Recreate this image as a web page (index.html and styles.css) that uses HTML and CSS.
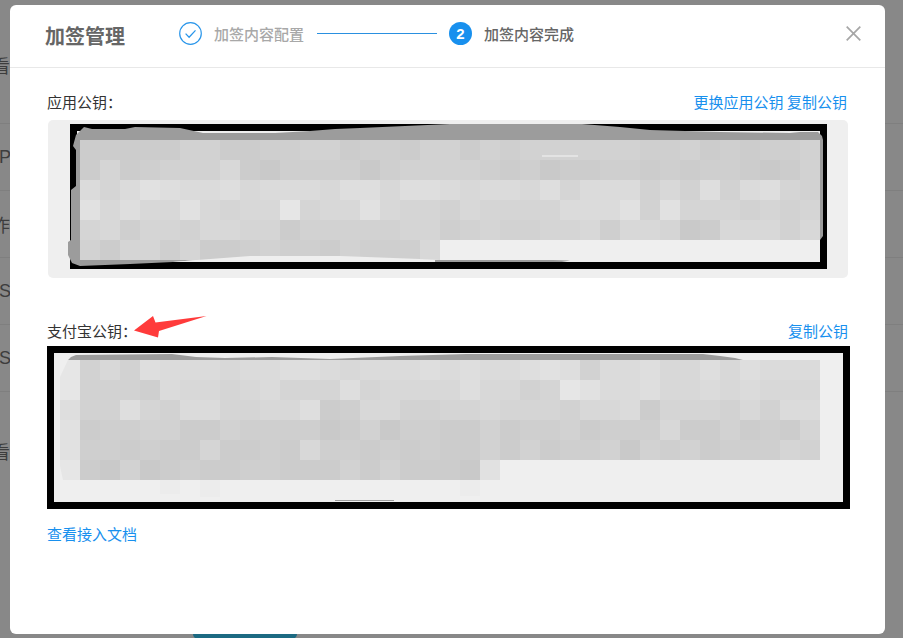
FILE: index.html
```html
<!DOCTYPE html>
<html lang="zh-CN">
<head>
<meta charset="utf-8">
<title>加签管理</title>
<link rel="stylesheet" href="styles.css">
</head>
<body>
<div class="page">
  <div class="row row-first"><span class="row-text row-cjk">查看</span></div>
  <div class="row"><span class="row-text row-latin">PI</span></div>
  <div class="row"><span class="row-text row-cjk">工作</span></div>
  <div class="row"><span class="row-text row-latin">SA</span></div>
  <div class="row"><span class="row-text row-latin">SA</span></div>
  <div class="row row-last"><span class="row-text row-cjk">查看</span></div>
  <div class="page-button"></div>
</div>

<div class="modal">
  <header class="modal-header">
    <h1 class="modal-title">加签管理</h1>
    <ol class="steps">
      <li class="step step-done">
        <svg class="step-icon" viewBox="0 0 23 23"><circle cx="11.5" cy="11.5" r="10.8" fill="none" stroke="#2a96ea" stroke-width="1.2"/><path d="M6.6 11.6l3.5 3.6 6.4-6.8" fill="none" stroke="#2a96ea" stroke-width="1.3"/></svg>
        <span>加签内容配置</span>
      </li>
      <li class="step-line"></li>
      <li class="step step-active">
        <span class="step-num">2</span>
        <span>加签内容完成</span>
      </li>
    </ol>
    <svg class="close" viewBox="0 0 15 15"><path d="M.7.7l13.6 13.6M14.3.7L.7 14.3" fill="none" stroke="#a6a6a6" stroke-width="1.7"/></svg>
  </header>

  <main class="modal-body">
    <section class="key key-app">
      <div class="key-head">
        <span class="key-label">应用公钥：</span>
        <span class="key-links"><a>更换应用公钥</a> <a>复制公钥</a></span>
      </div>
      <div class="key-panel">
        <svg class="shot shot-app" viewBox="48 120 800 158">
          <rect x="73.5" y="127.500" width="750" height="138" fill="#efefef" stroke="#000" stroke-width="7"/>
          <path class="smear" d="M76 135L84 127L92 129L125 129L135 127L180 128L203 133L275 133L310 131L335 129L360 128L450 124L582 124L620 127L650 130L685 131L720 132L790 133L800 132L818 132L822 136L823 140L823 236L820 240L80 240L80 260L197 260L173 262L130 264L80 266L72 263L68 255L68 242L71 240L71 190L76 186L76 150L73 146Z"/>
          <g class="cells" data-x="80" data-y="140" data-set="app"></g>
          <path class="patch" d="M173 262L197 260L250 256L340 256L420 259L440 260L440 262Z"/>
          <path class="smear" d="M435 260H553L570 260.500L562 262H435Z"/>
          <rect class="scratch" x="542" y="155.500" width="36" height="1"/>
        </svg>
      </div>
    </section>

    <section class="key key-alipay">
      <div class="key-head">
        <span class="key-label">支付宝公钥：</span>
        <span class="key-links"><a>复制公钥</a></span>
      </div>
      <svg class="arrow" viewBox="0 0 73 22"><path d="M0 14.500L19 0L21.500 6.500L72.500 0L25 15L24 21.500Z" fill="#ff3b3b"/></svg>
      <svg class="shot shot-alipay" viewBox="47 346 803 163">
        <rect x="50.500" y="349.500" width="796" height="156" fill="#efefef" stroke="#000" stroke-width="7"/>
        <path class="smear" d="M68 360L71 357L76 355L172 354L196 357L225 358L272 357L330 359L400 356L466 354L703 354L720 356L735 358L743 360Z"/>
        <g class="cells" data-x="60" data-y="360" data-set="alipay"></g>
        <path class="patch" d="M60 360H68L60 377ZM60 466L63 480H60Z"/>
        <rect class="faint" x="160" y="480" width="20" height="14"/>
        <rect class="faint" x="200" y="480" width="20" height="17"/>
        <rect class="faint" x="460" y="480" width="20" height="16"/>
        <rect class="smear" x="335" y="500" width="59" height="1"/>
      </svg>
    </section>

    <a class="doc-link">查看接入文档</a>
  </main>
</div>
<script src="mosaic.js"></script>
</body>
</html>
```

FILE: styles.css
```css
* { box-sizing: border-box; }

html, body { height: 100%; }

body {
  margin: 0;
  overflow: hidden;
  background: #888;
  font-family: "Noto Sans CJK SC", "Liberation Sans", sans-serif;
}

.page { padding-top: 7px; }

.row {
  height: 67px;
  display: flex;
  align-items: center;
  border-bottom: 1px solid #7f7f7f;
  color: #3d3d3d;
  white-space: nowrap;
}

.row-first { height: 117px; }
.row-last { height: 118px; border-bottom: 0; }
.row-text { display: block; }
.row-cjk { margin-left: -26px; font-size: 18px; }
.row-latin { margin-left: -1px; font-size: 18px; font-family: "Liberation Sans", sans-serif; }

.page-button {
  width: 104px;
  height: 32px;
  margin: 97px 0 0 193px;
  border-radius: 5px;
  background: #1c6a82;
}

.modal {
  position: absolute;
  left: 10px;
  top: 5px;
  width: 875px;
  height: 629px;
  border-radius: 6px;
  background: #fff;
}

.modal-header {
  position: relative;
  height: 63px;
  padding-left: 35px;
  display: flex;
  align-items: center;
  border-bottom: 1px solid #e8e8e8;
}

.modal-title {
  width: 134px;
  margin: 0;
  font-size: 20px;
  font-weight: 700;
  line-height: 28px;
  color: #666;
}

.steps {
  display: flex;
  align-items: center;
  margin: -6px 0 0;
  padding: 0;
  list-style: none;
}

.step {
  display: flex;
  align-items: center;
  gap: 12px;
  font-size: 15px;
  font-weight: 500;
  line-height: 23px;
}

.step-done { color: #a8a8a8; }
.step-active { color: #666; }

.step-icon { width: 23px; height: 23px; }

.step-num {
  width: 23px;
  height: 23px;
  border-radius: 50%;
  background: #1890ee;
  color: #fff;
  font-family: "Liberation Sans", sans-serif;
  font-size: 15px;
  font-weight: 700;
  line-height: 23px;
  text-align: center;
}

.step-line {
  width: 120px;
  height: 1px;
  margin: 0 12px 0 13px;
  background: #2a90e0;
}

.close {
  position: absolute;
  left: 836px;
  top: 21px;
  width: 15px;
  height: 15px;
}

.modal-body { padding: 22px 37px 0; }

.key { position: relative; }
.key-alipay { margin-top: 41px; }

.key-head {
  display: flex;
  justify-content: space-between;
  height: 30px;
  padding-top: 1px;
  font-size: 15px;
  line-height: 22px;
}

.key-label { color: #333; }
.key-links { color: #1890ee; }

.key-panel {
  width: 800px;
  height: 158px;
  margin-left: 1px;
  overflow: hidden;
  border-radius: 5px;
  background: #efefef;
}

.key-app .key-links { margin-right: 1px; }
.key-alipay .key-head { height: 27px; }

.shot { display: block; }
.shot-app { width: 800px; height: 158px; }
.shot-alipay { width: 803px; height: 163px; }

.smear { fill: #9c9c9c; }
.patch { fill: #efefef; }
.faint { fill: #ececec; }
.scratch { fill: #f4f4f4; }

.arrow {
  position: absolute;
  left: 87px;
  top: -3px;
  width: 73px;
  height: 22px;
}

.doc-link {
  display: block;
  margin-top: 14px;
  font-size: 15px;
  line-height: 22px;
  color: #1890ee;
}
```

FILE: mosaic.js
```js
var SHADES = ['#c9c9c9', '#cccccc', '#cfcfcf', '#d2d2d2', '#d5d5d5', '#d8d8d8', '#dbdbdb', '#dedede', '#e1e1e1', '#e6e6e6'];

var SETS = {
  app: [
    '1111133112233122133' + '132333333223121223',
    '1412333510222202333' + '321201122121221013',
    '6468766756665775776' + '566574666353736743',
    '8575585455945585443' + '544446668384443434',
    '4524435544133333442' + '343344525540155535',
    '314424112322132225'
  ],
  alipay: [
    '93537666566776566676' + '766787366755757666',
    '93332655456444745555' + '755349866755656555',
    '73374366445571255334' + '454443556144435366',
    '81223311322220130221' + '131223122251131214',
    '82212114112152212121' + '131312230323122243',
    '9103012112211131311108'
  ]
};

document.querySelectorAll('.cells').forEach(function (group) {
  var x0 = +group.dataset.x;
  var y0 = +group.dataset.y;
  SETS[group.dataset.set].forEach(function (row, r) {
    row.split('').forEach(function (digit, c) {
      var cell = document.createElementNS('http://www.w3.org/2000/svg', 'rect');
      cell.setAttribute('x', x0 + c * 20);
      cell.setAttribute('y', y0 + r * 20);
      cell.setAttribute('width', 20);
      cell.setAttribute('height', 20);
      cell.setAttribute('fill', SHADES[+digit]);
      group.appendChild(cell);
    });
  });
});
```
